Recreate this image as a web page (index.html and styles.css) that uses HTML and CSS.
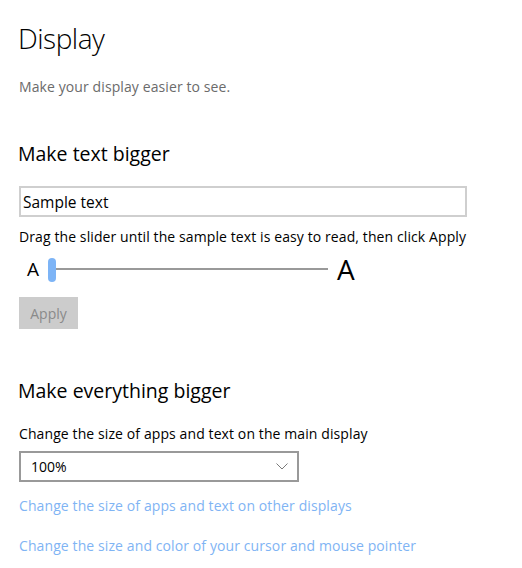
FILE: index.html
```html
<!DOCTYPE html>
<html lang="en">
<head>
<meta charset="utf-8">
<title>Display</title>
<link rel="stylesheet" href="styles.css">
</head>
<body>
<main class="page">
  <h1 class="title">Display</h1>
  <p class="desc">Make your display easier to see.</p>

  <h2 class="section first">Make text bigger</h2>
  <div class="textbox">Sample text</div>
  <p class="hint">Drag the slider until the sample text is easy to read, then click Apply</p>
  <div class="slider">
    <span class="a-small">A</span>
    <span class="thumb"></span>
    <span class="track"></span>
    <span class="a-big">A</span>
  </div>
  <button class="apply" type="button">Apply</button>

  <h2 class="section second">Make everything bigger</h2>
  <p class="label">Change the size of apps and text on the main display</p>
  <div class="select">
    <span class="select-value">100%</span>
    <svg class="chevron" width="12" height="7" viewBox="0 0 12 7" aria-hidden="true"><polyline points="0.5,0.5 6,6 11.5,0.5" fill="none" stroke="#7a7a7a" stroke-width="1"/></svg>
  </div>
  <a class="link link1" href="#">Change the size of apps and text on other displays</a>
  <a class="link link2" href="#">Change the size and color of your cursor and mouse pointer</a>
</main>
</body>
</html>
```

FILE: styles.css
```css
html, body {
  margin: 0;
  padding: 0;
  background: #ffffff;
}

.page {
  display: flex;
  flex-direction: column;
  align-items: flex-start;
  padding: 0 0 0 19px;
  font-family: "Open Sans", "Noto Sans", sans-serif;
  color: #000;
}

.title {
  margin: 20px 0 0 -1px;
  font-size: 28px;
  line-height: 36px;
  font-weight: 300;
  letter-spacing: -0.5px;
}

.desc {
  margin: 21px 0 0;
  font-size: 14px;
  line-height: 20px;
  color: #6b6b6b;
  letter-spacing: 0.1px;
}

.section {
  margin: 0 0 0 -1px;
  font-size: 19.5px;
  line-height: 28px;
  font-weight: 400;
}

.section.first { margin-top: 43px; }
.section.second { margin-top: 48px; }

.textbox {
  box-sizing: border-box;
  margin-top: 18px;
  width: 448px;
  height: 31px;
  border: 2px solid #cfcfcf;
  padding: 1px 0 0 2px;
  font-size: 15.5px;
  line-height: 27px;
}

.hint {
  margin: 10px 0 0;
  font-size: 14px;
  line-height: 20px;
  letter-spacing: 0.1px;
}

.slider {
  margin-top: 10px;
  height: 25px;
  display: flex;
  align-items: center;
}

.a-small {
  margin-left: 8px;
  font-size: 19px;
  line-height: 25px;
  width: 21px;
}

.thumb {
  width: 8px;
  height: 24px;
  border-radius: 4px;
  background: #7db4f6;
}

.track {
  width: 272px;
  height: 2px;
  background: #999999;
  margin-top: -2px;
}

.a-big {
  margin-left: 9px;
  font-size: 28px;
  line-height: 25px;
  font-weight: 400;
}

.apply {
  margin-top: 15px;
  width: 59px;
  height: 32px;
  border: none;
  padding: 0;
  background: #cccccc;
  color: #8a8a8a;
  font-family: inherit;
  font-size: 14px;
}

.label {
  margin: 19px 0 0;
  font-size: 14px;
  line-height: 20px;
  letter-spacing: 0.1px;
}

.select {
  box-sizing: border-box;
  margin-top: 7px;
  width: 280px;
  height: 31px;
  border: 2px solid #999999;
  padding: 0 9px 0 10px;
  display: flex;
  align-items: center;
  justify-content: space-between;
}

.select-value {
  font-size: 14px;
  line-height: 20px;
}

.chevron {
  margin-top: -1px;
}

.link {
  font-size: 14px;
  line-height: 20px;
  color: #7fb4f4;
  text-decoration: none;
  letter-spacing: 0.1px;
}

.link1 { margin-top: 14px; }
.link2 { margin-top: 20px; }
```
